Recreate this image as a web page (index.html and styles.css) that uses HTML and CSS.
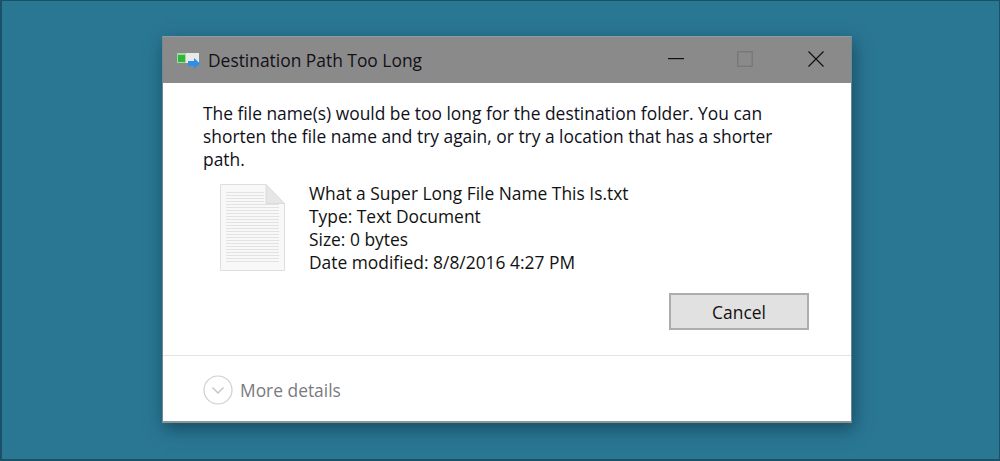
FILE: index.html
```html
<!DOCTYPE html>
<html lang="en">
<head>
<meta charset="utf-8">
<title>Destination Path Too Long</title>
<link rel="stylesheet" href="styles.css">
</head>
<body>
<div class="desktop">
  <div class="dialog">
    <header class="titlebar">
      <svg class="app-icon" width="24" height="18" viewBox="0 0 24 18">
        <rect x="1" y="2" width="22" height="10" fill="#e8eae8"/>
        <rect x="1" y="2" width="9" height="10" fill="#a6d8a6"/>
        <rect x="2" y="4" width="7" height="7" fill="#2fb53c"/>
        <path d="M12 10h6V7l6 5.500-6 5.500v-3h-6z" fill="#2f8fe6"/>
      </svg>
      <span class="title">Destination Path Too Long</span>
      <div class="controls">
        <span class="ctl ctl-min"><svg width="16" height="16" viewBox="0 0 16 16"><rect x="0" y="7" width="16" height="1.2" fill="#111"/></svg></span>
        <span class="ctl"><svg width="16" height="16" viewBox="0 0 16 16"><rect x="0.75" y="0.75" width="14.5" height="14.5" fill="none" stroke="#777" stroke-width="1.3"/></svg></span>
        <span class="ctl"><svg width="16" height="16" viewBox="0 0 16 16"><path d="M0.5 0.5l15 15M15.5 0.5l-15 15" stroke="#111" stroke-width="1.2" fill="none"/></svg></span>
      </div>
    </header>
    <main class="content">
      <p class="message">The file name(s) would be too long for the destination folder. You can shorten the file name and try again, or try a location that has a shorter path.</p>
      <div class="file">
        <svg class="doc" width="65" height="87" viewBox="0 0 65 87">
          <path d="M0.5 0.5H46L64.500 19.500V86.500H0.5z" fill="#f8f8f8" stroke="#dedede"/>
          <path d="M46 0.5V19.500H64.500z" fill="#e6e6e6" stroke="#dcdcdc"/>
          <path class="doc-lines" d="M6 8.500H44M6 11.500H44M6 14.500H44M6 17.500H44M6 20.500H59M6 23.500H59M6 26.500H59M6 29.500H59M6 32.500H59M6 35.500H59M6 38.500H59M6 41.500H59M6 44.500H59M6 47.500H59M6 50.500H59M6 53.500H59M6 56.500H59M6 59.500H59M6 62.500H59M6 65.500H59M6 68.500H59M6 71.500H59M6 74.500H59M6 77.500H59"/>
        </svg>
        <ul class="meta">
          <li>What a Super Long File Name This Is.txt</li>
          <li>Type: Text Document</li>
          <li>Size: 0 bytes</li>
          <li>Date modified: 8/8/2016 4:27 PM</li>
        </ul>
      </div>
      <div class="actions"><button class="cancel" type="button">Cancel</button></div>
    </main>
    <footer class="details">
      <svg width="30" height="30" viewBox="0 0 30 30"><circle cx="15" cy="15" r="14" fill="#fff" stroke="#cfcfcf" stroke-width="1.2"/><path d="M9.500 12.500L15 18l5.500-5.500" fill="none" stroke="#c4c4c4" stroke-width="1.4"/></svg>
      <span class="more">More details</span>
    </footer>
  </div>
</div>
</body>
</html>
```
FILE: styles.css
```css
* { box-sizing: border-box; }
html, body { margin: 0; height: 461px; overflow: hidden; }
body { font-family: "Open Sans", "Noto Sans", sans-serif; color: #111; }
.desktop {
  height: 461px;
  padding: 35px 0 0 160px;
  background: #2a7794;
  border-style: solid;
  border-color: #1b5166;
  border-width: 1px 1px 2px 2px;
}
.dialog {
  width: 690px;
  height: 387px;
  background: #fff;
  border: 1px solid #6f8a94;
  border-top-color: #8b9da3;
  border-bottom: 2px solid #8f9496;
  box-shadow: 2px 6px 16px rgba(8, 40, 55, 0.55);
  display: flex;
  flex-direction: column;
}
.titlebar {
  height: 46px;
  flex: none;
  background: #8a8a8a;
  display: flex;
  align-items: center;
  padding-left: 13px;
}
.app-icon { flex: none; }
.title { margin-left: 8px; font-size: 17.4px; color: #141018; }
.controls { margin-left: auto; display: flex; align-self: flex-start; }
.ctl { width: 71px; height: 44px; display: flex; align-items: center; justify-content: center; }
.ctl-min { width: 67px; }
.ctl svg { display: block; }
.content { flex: none; height: 273px; padding: 19px 40px 0; border-bottom: 1px solid #e3e3e3; }
.message { margin: 0; font-size: 17.4px; line-height: 23px; color: #10101a; width: 590px; }
.file { display: flex; margin: 11px 0 0 17px; height: 92px; }
.doc { flex: none; margin-top: 2px; }
.doc-lines { stroke: #e2e2e2; stroke-width: 1; fill: none; }
.meta { list-style: none; margin: 0 0 0 24px; padding: 0; font-size: 17.4px; line-height: 23px; color: #111; }
.actions { display: flex; justify-content: flex-end; padding: 19px 2px 0 0; }
.cancel {
  width: 140px;
  height: 37px;
  background: #e1e1e1;
  border: 2px solid #adadad;
  font: inherit;
  font-size: 17.4px;
  color: #111;
  padding: 0;
}
.details { flex: 1; display: flex; align-items: center; padding: 2px 0 0 40px; }
.more { margin-left: 7px; font-size: 17.4px; color: #7a7a80; }
```
